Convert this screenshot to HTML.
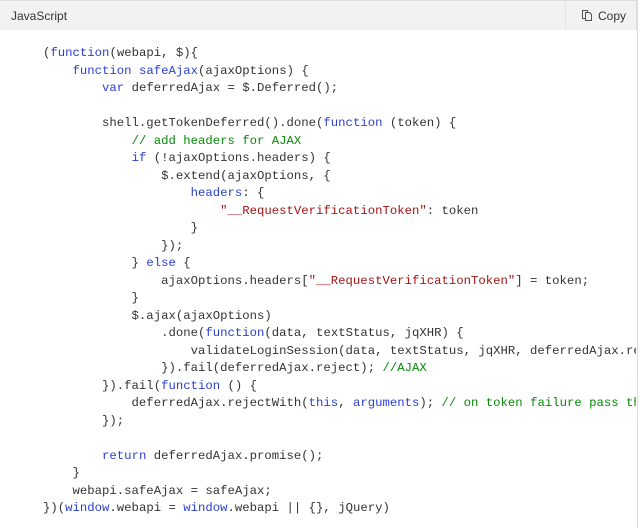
<!DOCTYPE html>
<html><head><style>
body{margin:0;width:640px;height:528px;background:#fff;overflow:hidden;position:relative}
.hd{position:absolute;left:0;top:0;width:637px;height:30px;background:#f2f2f2;border-top:1px solid #ddd;border-right:1px solid #ddd;box-sizing:border-box;font-family:"Liberation Sans",sans-serif;font-size:12px;color:#333}
.hd .l{position:absolute;left:11px;top:8px}
.hd .c{position:absolute;left:565px;top:0;height:29px;width:72px;border-left:1px solid #e4e4e4}
.hd .c span{position:absolute;left:32px;top:8px}
.rb{position:absolute;left:637px;top:0;width:1px;height:528px;background:#ddd}
.wrap{position:absolute;left:0;top:30px;width:636px;height:498px;overflow:hidden}
pre{position:absolute;left:43px;top:15px;margin:0;font-family:"Liberation Mono",monospace;font-size:12.3px;line-height:17.5px;color:#333;white-space:pre}
.k{color:#2a3fd0}.s{color:#a31515}.g{color:#078a07}
</style></head><body>
<div class="hd"><span class="l">JavaScript</span><div class="c"><svg style="position:absolute;left:15px;top:8px" width="12" height="13" viewBox="0 0 12 13" fill="none" stroke="#555" stroke-width="1"><path d="M1.5 1.5h5v8h-5z"/><path d="M4.5 3.5h4l2 2v6h-6z" fill="#f2f2f2"/></svg><span>Copy</span></div></div>
<div class="rb"></div>
<div class="wrap"><pre>(<span class="k">function</span>(webapi, $){
    <span class="k">function</span> <span class="k">safeAjax</span>(ajaxOptions) {
        <span class="k">var</span> deferredAjax = $.Deferred();

        shell.getTokenDeferred().done(<span class="k">function</span> (token) {
            <span class="g">// add headers for AJAX</span>
            <span class="k">if</span> (!ajaxOptions.headers) {
                $.extend(ajaxOptions, {
                    <span class="k">headers</span>: {
                        <span class="s">"__RequestVerificationToken"</span>: token
                    }
                });
            } <span class="k">else</span> {
                ajaxOptions.headers[<span class="s">"__RequestVerificationToken"</span>] = token;
            }
            $.ajax(ajaxOptions)
                .done(<span class="k">function</span>(data, textStatus, jqXHR) {
                    validateLoginSession(data, textStatus, jqXHR, deferredAjax.resolve);
                }).fail(deferredAjax.reject); <span class="g">//AJAX</span>
        }).fail(<span class="k">function</span> () {
            deferredAjax.rejectWith(<span class="k">this</span>, <span class="k">arguments</span>); <span class="g">// on token failure pass the token</span>
        });

        <span class="k">return</span> deferredAjax.promise();
    }
    webapi.safeAjax = safeAjax;
})(<span class="k">window</span>.webapi = <span class="k">window</span>.webapi || {}, jQuery)</pre></div>
</body></html>
